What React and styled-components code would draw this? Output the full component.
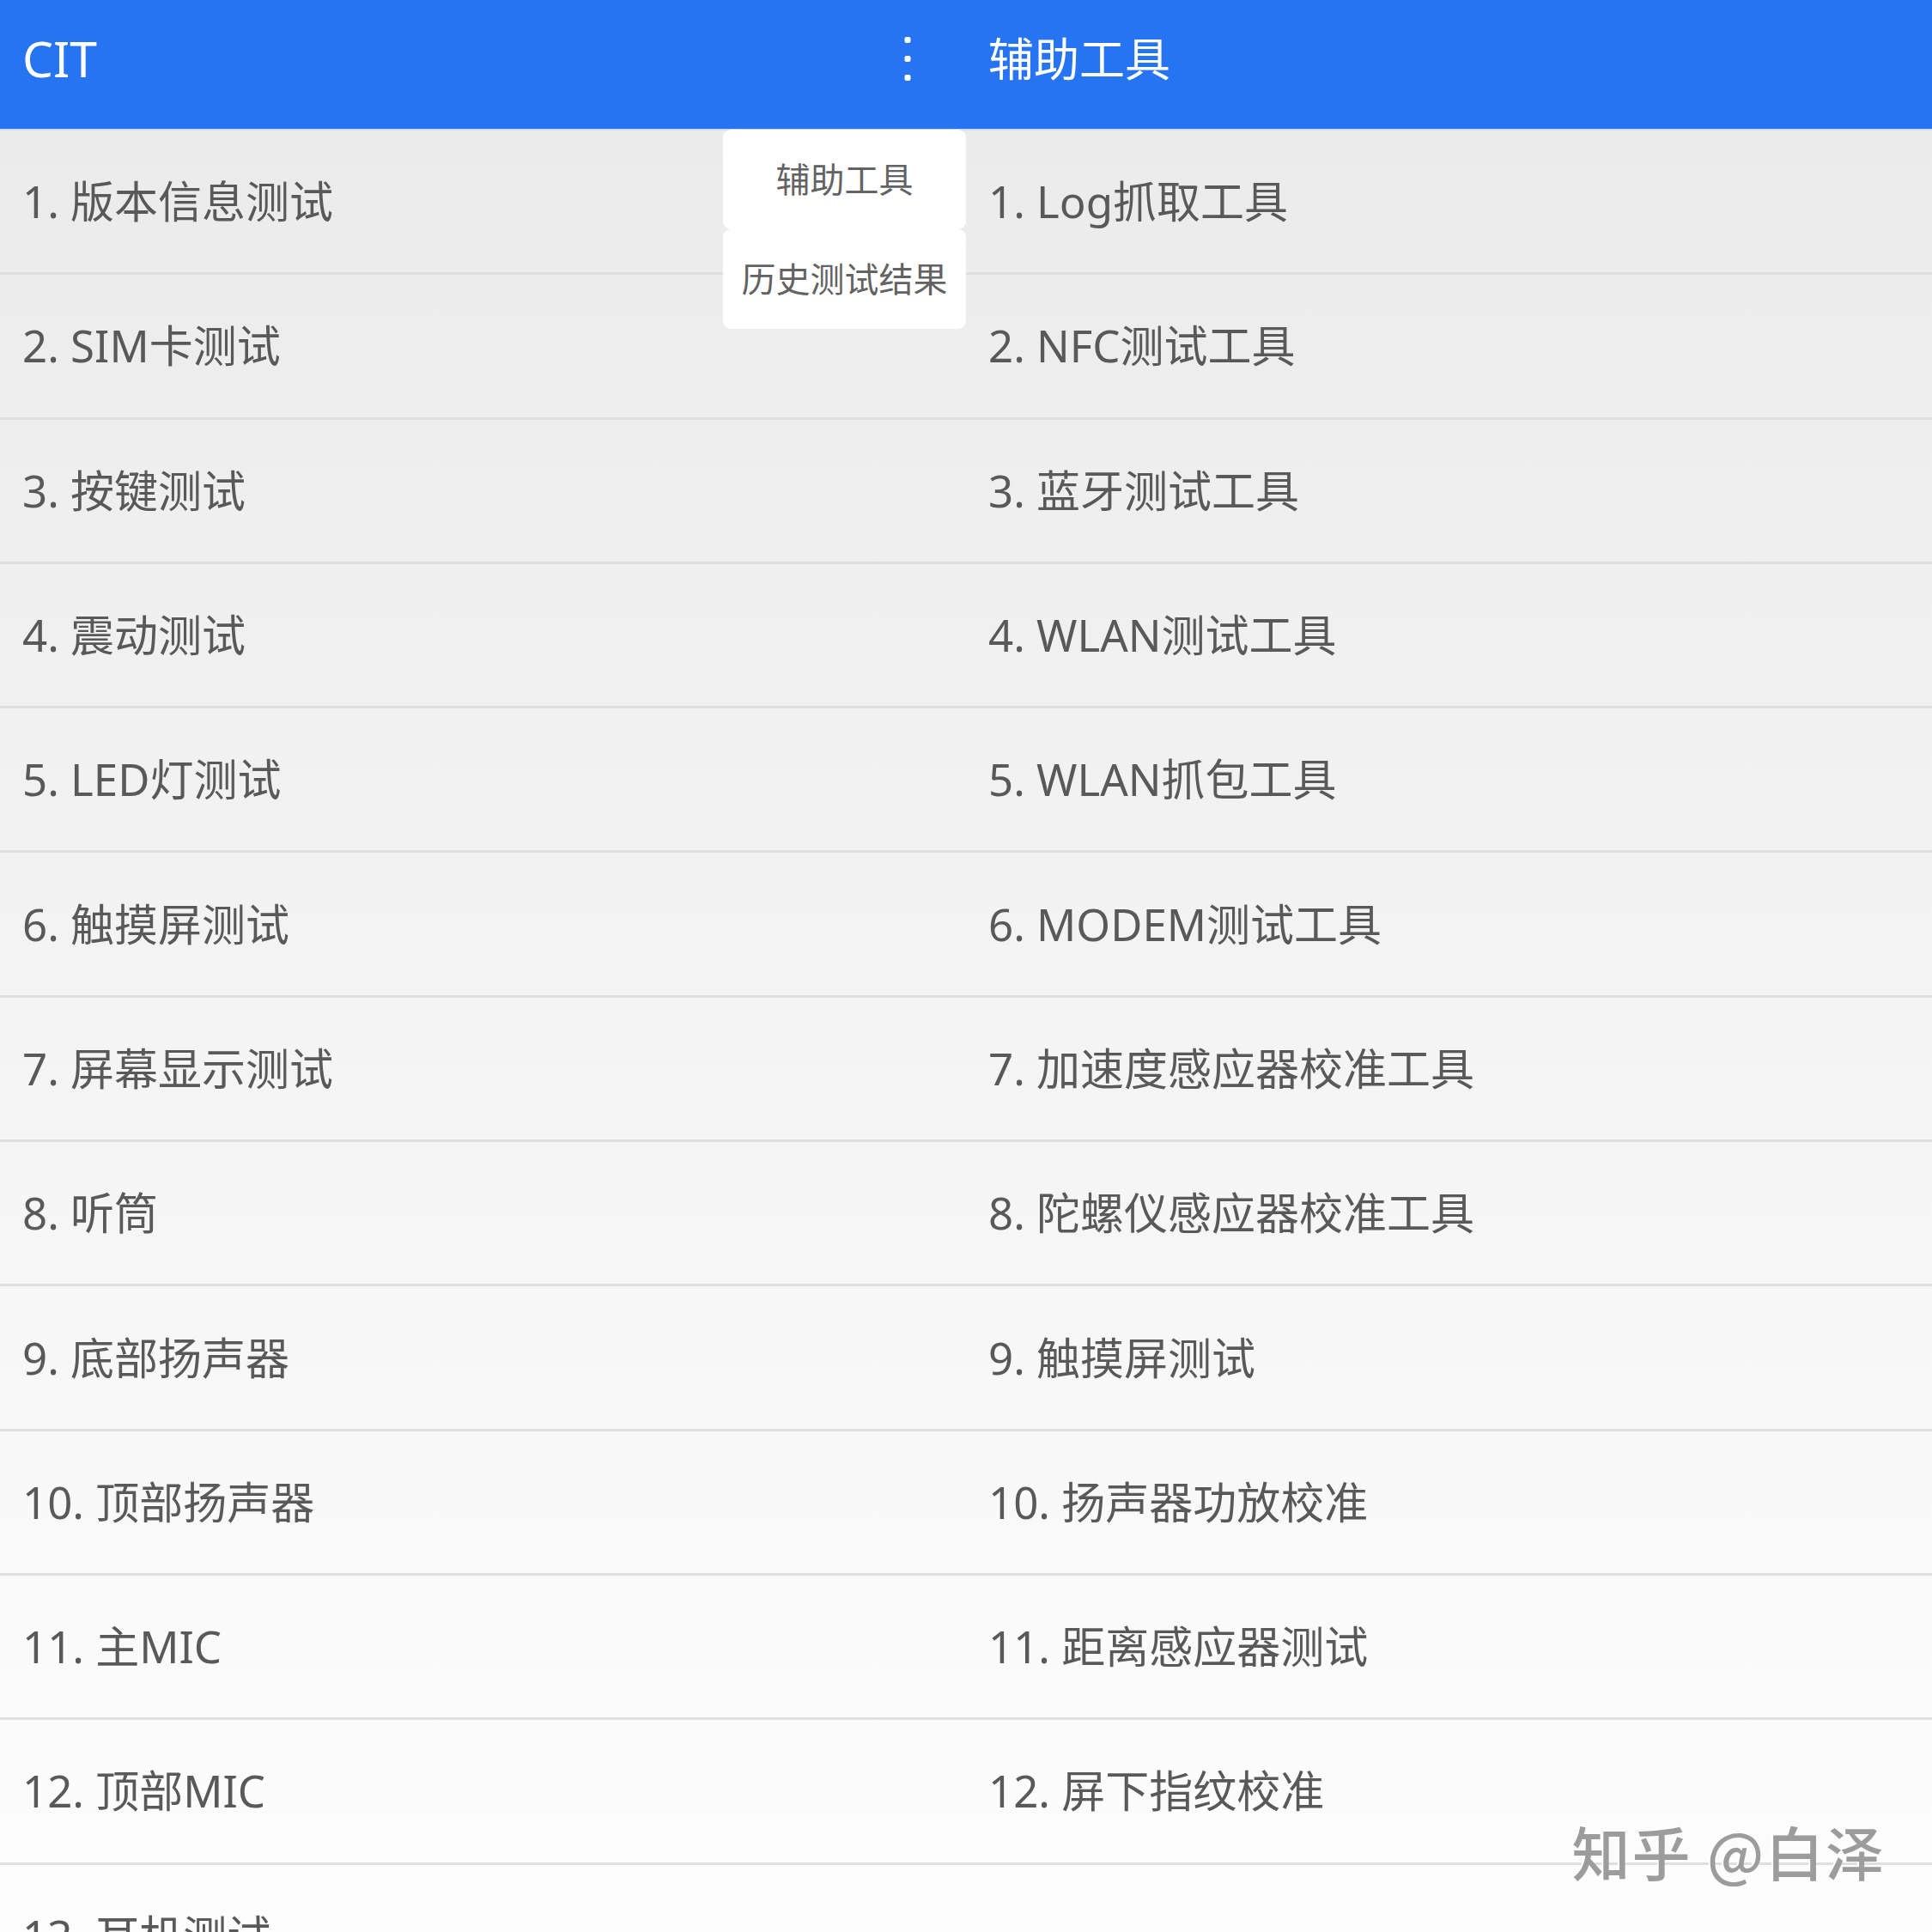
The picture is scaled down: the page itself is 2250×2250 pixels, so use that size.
// Dependencies
import React from 'react';
import styled, { createGlobalStyle } from 'styled-components';

const GlobalStyle = createGlobalStyle`
  body {
    margin: 0;
    background: #ffffff;
    font-family: "Noto Sans", "Noto Sans CJK SC", sans-serif;
  }
`;

const Screen = styled.div`
  position: relative;
  width: 2250px;
  height: 2250px;
  overflow: hidden;
  display: grid;
  grid-template-columns: 1125px 1125px;
`;

const Panel = styled.section`
  position: relative;
  display: flex;
  flex-direction: column;
  min-width: 0;
`;

const AppBar = styled.header`
  box-sizing: border-box;
  height: 152px;
  flex: none;
  display: flex;
  align-items: center;
  justify-content: space-between;
  padding: 0 44px 14px 26px;
  background-color: #2674f2;
  border-bottom: 2px solid #cddcf9;
`;

const Title = styled.h1`
  margin: 0;
  color: #ffffff;
  font-size: ${({ size }) => size}px;
  font-weight: 400;
  line-height: 1;
`;

const MoreButton = styled.button`
  width: 48px;
  height: 80px;
  padding: 0;
  border: none;
  background: transparent;
  display: flex;
  align-items: center;
  justify-content: center;
`;

const List = styled.ul`
  flex: 1;
  margin: 0;
  padding: 0;
  list-style: none;
  background: linear-gradient(to bottom, #ebebeb 0px, #fdfdfd 2098px);
`;

const Row = styled.li`
  box-sizing: border-box;
  height: 168.3px;
  display: flex;
  align-items: center;
  padding-left: 26px;
  border-bottom: 3px solid #dfdfdf;
  color: #595959;
  font-size: 51px;
  line-height: 1;
  white-space: nowrap;
`;

const Menu = styled.div`
  position: absolute;
  top: 151px;
  right: 0;
  width: 283px;
  display: flex;
  flex-direction: column;
`;

const MenuItem = styled.div`
  height: 116px;
  display: flex;
  align-items: center;
  justify-content: center;
  background: #ffffff;
  border-radius: 9px;
  color: #636363;
  font-size: 40px;
  line-height: 1;
`;

const Watermark = styled.div`
  position: absolute;
  right: 54px;
  bottom: 60px;
  color: #9c9c9c;
  font-family: "Noto Sans CJK SC", sans-serif;
  font-size: 68px;
  font-weight: 500;
  line-height: 1;
  letter-spacing: 2px;
  text-shadow: -2px -1px 0 rgba(255, 255, 255, 0.9);
  pointer-events: none;
`;

const tests = [
  '版本信息测试', 'SIM卡测试', '按键测试', '震动测试', 'LED灯测试', '触摸屏测试',
  '屏幕显示测试', '听筒', '底部扬声器', '顶部扬声器', '主MIC', '顶部MIC', '耳机测试'
];

const tools = [
  'Log抓取工具', 'NFC测试工具', '蓝牙测试工具', 'WLAN测试工具', 'WLAN抓包工具',
  'MODEM测试工具', '加速度感应器校准工具', '陀螺仪感应器校准工具', '触摸屏测试',
  '扬声器功放校准', '距离感应器测试', '屏下指纹校准', ''
];

const MoreIcon = () => (
  <svg width="10" height="54" viewBox="0 0 10 54">
    <rect x="1.5" y="2" width="7" height="7" rx="2" fill="#ffffff" />
    <rect x="1.5" y="24" width="7" height="7" rx="2" fill="#ffffff" />
    <rect x="1.5" y="46" width="7" height="7" rx="2" fill="#ffffff" />
  </svg>
);

const App = () => (
  <Screen>
    <GlobalStyle />
    <Panel>
      <AppBar>
        <Title size={57}>CIT</Title>
        <MoreButton aria-label="更多">
          <MoreIcon />
        </MoreButton>
      </AppBar>
      <List>
        {tests.map((name, i) => (
          <Row key={name}>{`${i + 1}. ${name}`}</Row>
        ))}
      </List>
      <Menu>
        <MenuItem>辅助工具</MenuItem>
        <MenuItem>历史测试结果</MenuItem>
      </Menu>
    </Panel>
    <Panel>
      <AppBar>
        <Title size={53}>辅助工具</Title>
      </AppBar>
      <List>
        {tools.map((name, i) => (
          <Row key={i}>{name ? `${i + 1}. ${name}` : ''}</Row>
        ))}
      </List>
    </Panel>
    <Watermark>知乎 @白泽</Watermark>
  </Screen>
);

export default App;
